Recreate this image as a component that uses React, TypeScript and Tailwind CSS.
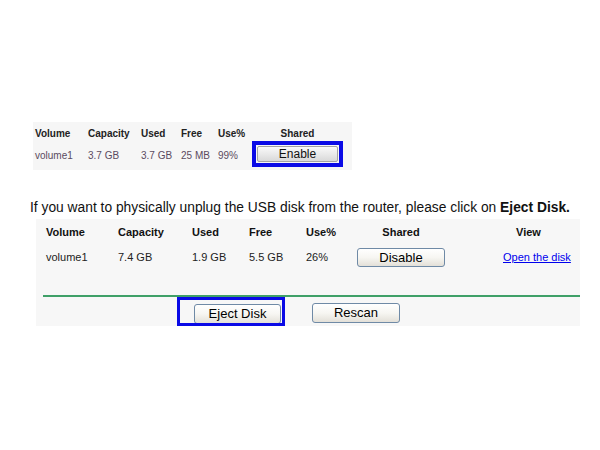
import React from "react";

const xpButton =
  "flex items-center justify-center border border-[#6f8aa6] rounded-[3px] bg-gradient-to-b from-white via-[#f7f6f2] to-[#e3e0d8] text-[13px] text-black leading-none";

export default function App() {
  return (
    <div className="w-[600px] h-[450px] bg-white font-['Liberation_Sans',Arial,sans-serif] overflow-hidden">
      {/* Small table */}
      <div className="pt-[122px] pl-[33px]">
        <div className="w-[319px] h-[48px] bg-[#f6f6f6] pl-[2px]">
          <div className="grid grid-cols-[53px_53px_40px_37px_34px_91px] h-[19px] pt-[6px] text-[10px] leading-[12px] font-bold text-[#222]">
            <span>Volume</span>
            <span>Capacity</span>
            <span>Used</span>
            <span>Free</span>
            <span>Use%</span>
            <span className="text-center">Shared</span>
          </div>
          <div className="grid grid-cols-[53px_53px_40px_37px_34px_91px] h-[26px] items-center text-[10px] text-[#5b4b60]">
            <span className="pt-[3px]">volume1</span>
            <span className="pt-[3px]">3.7 GB</span>
            <span className="pt-[3px]">3.7 GB</span>
            <span className="pt-[3px]">25 MB</span>
            <span className="pt-[3px]">99%</span>
            <div className="h-[26px] border-[4px] border-[#0a0ae6] p-px">
              <div className="h-full flex items-center justify-center border border-[#a3a3a3] rounded-[2px] bg-gradient-to-b from-[#fafafa] to-[#d9d9d9] text-[12px] text-[#111]">
                Enable
              </div>
            </div>
          </div>
        </div>
      </div>

      {/* Instruction */}
      <p className="mt-[30px] pl-[30px] text-[13.8px] leading-[16px] text-[#111] whitespace-nowrap">
        If you want to physically unplug the USB disk from the router, please click on <b>Eject Disk.</b>
      </p>

      {/* Big table */}
      <div className="mt-[3px] ml-[36px] w-[544px] h-[107px] bg-[#f7f7f7]">
        <div className="grid grid-cols-[72px_74px_57px_57px_51px_146px_auto] pl-[10px] h-[29px] pt-[7px] text-[11px] leading-[13px] font-bold text-[#111]">
          <span>Volume</span>
          <span>Capacity</span>
          <span>Used</span>
          <span>Free</span>
          <span>Use%</span>
          <span className="w-[88px] text-center">Shared</span>
          <span className="pl-[13px]">View</span>
        </div>
        <div className="grid grid-cols-[72px_74px_57px_57px_51px_146px_auto] pl-[10px] h-[19px] items-center text-[11px] text-[#222]">
          <span>volume1</span>
          <span>7.4 GB</span>
          <span>1.9 GB</span>
          <span>5.5 GB</span>
          <span>26%</span>
          <div className={`${xpButton} w-[88px] h-[19px]`}>Disable</div>
          <a href="#" className="text-[#0000ee] underline">Open the disk</a>
        </div>

        <div className="mt-[28px] ml-[7px] h-[1.5px] bg-[#3fa068]" />

        <div className="flex items-start pl-[141px]">
          <div className="w-[108px] h-[29px] border-[3px] border-[#0a0ae6] pl-[14px] pt-[4px] overflow-hidden">
            <div className={`${xpButton} w-[87px] h-[20px]`}>Eject Disk</div>
          </div>
          <div className={`${xpButton} ml-[27px] mt-[6px] w-[88px] h-[20px]`}>Rescan</div>
        </div>
      </div>
    </div>
  );
}
